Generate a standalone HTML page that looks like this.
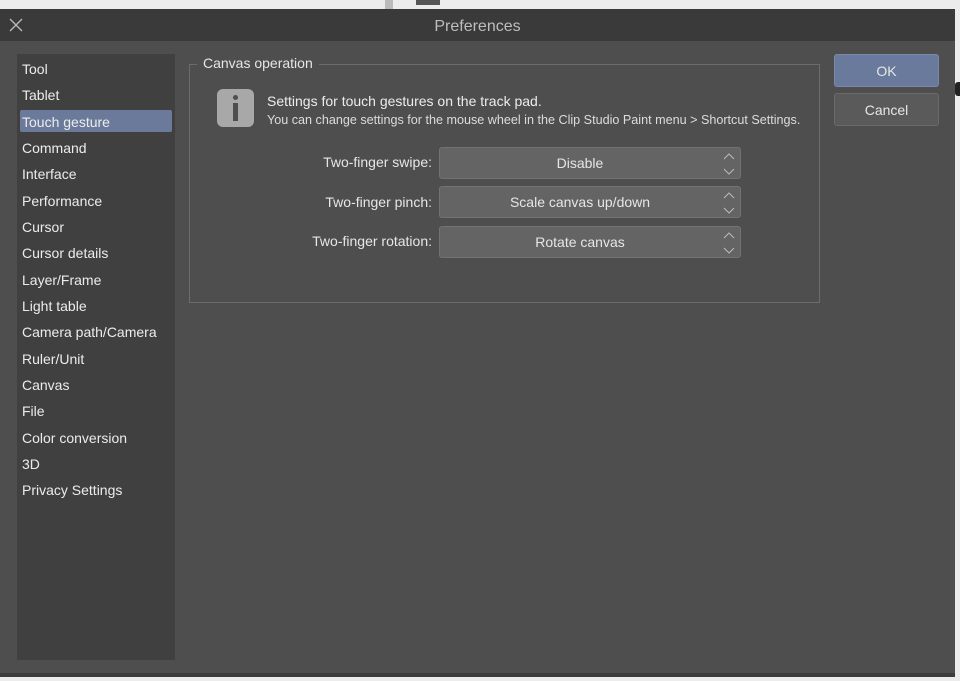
<!DOCTYPE html>
<html><head><meta charset="utf-8"><style>
body{margin:0;width:960px;height:681px;background:#ececec;position:relative;overflow:hidden;font-family:"Liberation Sans",sans-serif;color:#e6e6e6}
.dlg{position:absolute;left:0;top:9px;width:955px;height:668px;background:#4e4e4e;border-bottom:4px solid #3c3c3c;box-sizing:border-box}
.title{position:absolute;left:0;top:0;width:955px;height:32px;background:#3a3a3a;text-align:center;line-height:35px;font-size:16px;color:#bdbdbd}
.side{position:absolute;left:17px;top:45px;width:158px;height:606px;background:#404040}
.item{position:absolute;left:5px;font-size:14px;color:#ececec}
.sel{position:absolute;left:3px;top:56px;width:152px;height:22px;background:#6b7a9a;border-radius:2px}
.grp{position:absolute;left:189px;top:55px;width:631px;height:239px;border:1px solid #6c6c6c;box-sizing:border-box}
.gt{position:absolute;left:197px;top:46px;padding:0 6px;background:#4e4e4e;font-size:14px}
.btn{position:absolute;left:834px;width:105px;height:33px;border-radius:3px;text-align:center;line-height:33px;font-size:14px;box-sizing:border-box;border:1px solid #6a6a6a}
.lab{position:absolute;right:523px;font-size:14px;color:#e6e6e6}
.dd{position:absolute;left:439px;width:302px;height:32px;background:#646464;border:1px solid #727272;border-radius:3px;box-sizing:border-box;text-align:center;line-height:31px;font-size:14px;padding-right:20px}
.dd svg{position:absolute;right:4px;top:4px}
</style></head><body>
<div style="position:absolute;left:385px;top:0;width:8px;height:9px;background:#bbb"></div>
<div style="position:absolute;left:416px;top:0;width:24px;height:5px;background:#555"></div>
<div class="dlg">
<div class="title">Preferences
<svg style="position:absolute;left:9px;top:9px" width="14" height="14"><path d="M1 1L13 13M13 1L1 13" stroke="#bbb" stroke-width="1.3"/></svg></div>
<div class="side">
<div class="sel"></div>
<div class="item" style="top:7px">Tool</div>
<div class="item" style="top:33px">Tablet</div>
<div class="item" style="top:60px">Touch gesture</div>
<div class="item" style="top:86px">Command</div>
<div class="item" style="top:112px">Interface</div>
<div class="item" style="top:139px">Performance</div>
<div class="item" style="top:165px">Cursor</div>
<div class="item" style="top:191px">Cursor details</div>
<div class="item" style="top:218px">Layer/Frame</div>
<div class="item" style="top:244px">Light table</div>
<div class="item" style="top:270px">Camera path/Camera</div>
<div class="item" style="top:297px">Ruler/Unit</div>
<div class="item" style="top:323px">Canvas</div>
<div class="item" style="top:349px">File</div>
<div class="item" style="top:376px">Color conversion</div>
<div class="item" style="top:402px">3D</div>
<div class="item" style="top:428px">Privacy Settings</div>
</div>
<div class="grp"></div>
<div class="gt">Canvas operation</div>
<div style="position:absolute;left:217px;top:80px;width:37px;height:38px;background:#a8a8a8;border-radius:6px">
<div style="position:absolute;left:16px;top:6px;width:5px;height:5px;border-radius:50%;background:#4e4e4e"></div>
<div style="position:absolute;left:16px;top:14px;width:5px;height:18px;background:#4e4e4e"></div></div>
<div style="position:absolute;left:267px;top:84px;font-size:14px;color:#ececec">Settings for touch gestures on the track pad.</div>
<div style="position:absolute;left:267px;top:104px;font-size:12.6px;color:#dcdcdc">You can change settings for the mouse wheel in the Clip Studio Paint menu &gt; Shortcut Settings.</div>
<div class="lab" style="top:145px">Two-finger swipe:</div>
<div class="lab" style="top:185px">Two-finger pinch:</div>
<div class="lab" style="top:224px">Two-finger rotation:</div>
<div class="dd" style="top:138px">Disable<svg width="14" height="24"><path d="M2 7L7 2L12 7M2 17L7 22L12 17" stroke="#bbb" fill="none"/></svg></div>
<div class="dd" style="top:177px">Scale canvas up/down<svg width="14" height="24"><path d="M2 7L7 2L12 7M2 17L7 22L12 17" stroke="#bbb" fill="none"/></svg></div>
<div class="dd" style="top:217px">Rotate canvas<svg width="14" height="24"><path d="M2 7L7 2L12 7M2 17L7 22L12 17" stroke="#bbb" fill="none"/></svg></div>
<div class="btn" style="top:45px;background:#6a7a9c;border-color:#7889aa">OK</div>
<div class="btn" style="top:84px;background:#5a5a5a">Cancel</div>
</div>
<div style="position:absolute;left:955px;top:82px;width:5px;height:14px;background:#222;border-radius:3px 0 0 3px"></div>
</body></html>
